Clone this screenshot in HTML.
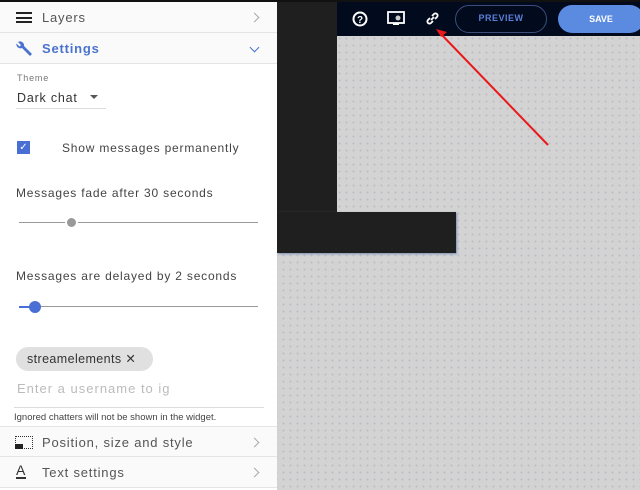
<!DOCTYPE html>
<html><head><style>
*{margin:0;padding:0;box-sizing:border-box}
body{width:640px;height:490px;overflow:hidden;position:relative;font-family:"Liberation Sans",sans-serif;background:#d3d3d3;
background-image:radial-gradient(circle,#bdbdc4 0.8px,transparent 1.1px);background-size:7px 7px}
.topb{position:absolute;left:0;top:0;width:640px;height:2px;background:#111}
.side{position:absolute;left:0;top:2px;width:277px;height:488px;background:#fff}
.row{position:absolute;left:0;width:277px;height:31px;border-bottom:1px solid #e4e4e4;background:#fafafa;font-size:13px;color:#555;letter-spacing:.8px}
.row .t{position:absolute;left:42px;top:8px}
.chev{position:absolute;right:19px;top:12px;width:7px;height:7px;border-right:1.5px solid #aaa;border-top:1.5px solid #aaa;transform:rotate(45deg)}
.txt{position:absolute;font-size:12px;color:#444;letter-spacing:.8px}
.dark{position:absolute;background:#1f1f1f}
.nav{position:absolute;left:337px;top:2px;width:303px;height:34px;background:#020b1e}
</style></head><body>
<div class="topb"></div>
<div class="dark" style="left:277px;top:2px;width:60px;height:212px"></div>
<div class="dark" style="left:277px;top:212px;width:179px;height:41px;box-shadow:1px 1px 2px #7a8db5"></div>
<div class="nav">
 <svg style="position:absolute;left:15px;top:9px" width="16" height="16" viewBox="0 0 16 16"><circle cx="8" cy="8" r="6.5" fill="none" stroke="#fff" stroke-width="2"/><text x="8" y="12" font-size="10" font-weight="bold" fill="#fff" text-anchor="middle" font-family="Liberation Sans">?</text></svg>
 <svg style="position:absolute;left:50px;top:9px" width="18" height="16" viewBox="0 0 18 16"><rect x="1" y="1" width="16" height="11" fill="none" stroke="#fff" stroke-width="1.8"/><rect x="6" y="12" width="6" height="2" fill="#fff"/><circle cx="11" cy="7" r="2.5" fill="#ccc"/></svg>
 <svg style="position:absolute;left:88px;top:9px" width="15" height="15" viewBox="0 0 15 15"><path d="M6 9l3-3M5 7L3 9a2 2 0 003 3l2-2M10 8l2-2a2 2 0 00-3-3L7 5" stroke="#fff" stroke-width="1.8" fill="none"/></svg>
 <div style="position:absolute;left:118px;top:3px;width:92px;height:28px;border:1.5px solid #3b4d7a;border-radius:14px;color:#5b7fd6;font-size:9px;font-weight:bold;text-align:center;line-height:25px;letter-spacing:.5px">PREVIEW</div>
 <div style="position:absolute;left:221px;top:3px;width:86px;height:28px;background:#5b8be0;border-radius:14px;color:#fff;font-size:9px;font-weight:bold;text-align:center;line-height:28px">SAVE</div>
</div>
<svg style="position:absolute;left:430px;top:25px" width="125" height="125"><line x1="118" y1="120" x2="10" y2="8" stroke="#e8191b" stroke-width="2"/><path d="M6 4l11 3-6 5z" fill="#e8191b"/></svg>
<div class="side">
 <div class="row" style="top:0">
  <div style="position:absolute;left:16px;top:10px;width:16px;height:11px;border-top:2px solid #222;border-bottom:2px solid #222"><div style="margin-top:2.5px;height:2px;background:#222"></div></div>
  <span class="t">Layers</span><div class="chev"></div></div>
 <div class="row" style="top:31px">
  <svg style="position:absolute;left:15px;top:7px" width="18" height="17" viewBox="0 0 18 17"><path d="M3 2l3 3-1.5 1.5-3-3A4 4 0 007 8l8 8 2-2-8-8A4 4 0 003 2z" fill="#4a73cf"/></svg>
  <span class="t" style="color:#4a73cf;font-weight:bold">Settings</span>
  <div class="chev" style="transform:rotate(135deg);border-color:#4a73cf;top:11px"></div></div>
 <div class="txt" style="left:17px;top:71px;font-size:9px;color:#777">Theme</div>
 <div class="txt" style="left:17px;top:89px;font-size:12.5px;color:#333">Dark chat</div>
 <div style="position:absolute;left:90px;top:93px;border:4px solid transparent;border-top:4px solid #555"></div>
 <div style="position:absolute;left:16px;top:106px;width:90px;height:1px;background:#ddd"></div>
 <div style="position:absolute;left:17px;top:139px;width:13px;height:13px;background:#4a6fd4;color:#fff;font-size:10px;line-height:13px;text-align:center">✓</div>
 <div class="txt" style="left:62px;top:139px">Show messages permanently</div>
 <div class="txt" style="left:16px;top:184px">Messages fade after 30 seconds</div>
 <div style="position:absolute;left:19px;top:220px;width:239px;height:1px;background:#999"></div>
 <div style="position:absolute;left:67px;top:216px;width:9px;height:9px;border-radius:50%;background:#999;box-shadow:0 0 0 2px #fff"></div>
 <div class="txt" style="left:16px;top:267px">Messages are delayed by 2 seconds</div>
 <div style="position:absolute;left:19px;top:304px;width:239px;height:1px;background:#999"></div>
 <div style="position:absolute;left:19px;top:304px;width:12px;height:2px;background:#4a6fd4"></div>
 <div style="position:absolute;left:29px;top:299px;width:12px;height:12px;border-radius:50%;background:#4a6fd4"></div>
 <div style="position:absolute;left:16px;top:345px;width:137px;height:24px;border-radius:12px;background:#e0e0e0;font-size:12.5px;color:#333;line-height:24px;padding-left:11px;letter-spacing:.4px">streamelements ✕</div>
 <div class="txt" style="left:17px;top:379px;font-size:13px;color:#bbb;width:152px;overflow:hidden;white-space:nowrap;letter-spacing:1px">Enter a username to ignore</div>
 <div style="position:absolute;left:14px;top:405px;width:250px;height:1px;background:#ddd"></div>
 <div class="txt" style="left:14px;top:410px;font-size:9.5px;color:#444;letter-spacing:0">Ignored chatters will not be shown in the widget.</div>
 <div class="row" style="top:424px;border-top:1px solid #e4e4e4">
  <div style="position:absolute;left:15px;top:9px;width:18px;height:13px;border:1.5px dotted #333"><div style="position:absolute;left:-1px;bottom:-1px;width:8px;height:5px;background:#222"></div></div>
  <span class="t">Position, size and style</span><div class="chev"></div></div>
 <div class="row" style="top:455px">
  <div style="position:absolute;left:16px;top:6px;font-size:14px;color:#333;border-bottom:2px solid #333;line-height:14px">A</div>
  <span class="t">Text settings</span><div class="chev"></div></div>
</div>
</body></html>
